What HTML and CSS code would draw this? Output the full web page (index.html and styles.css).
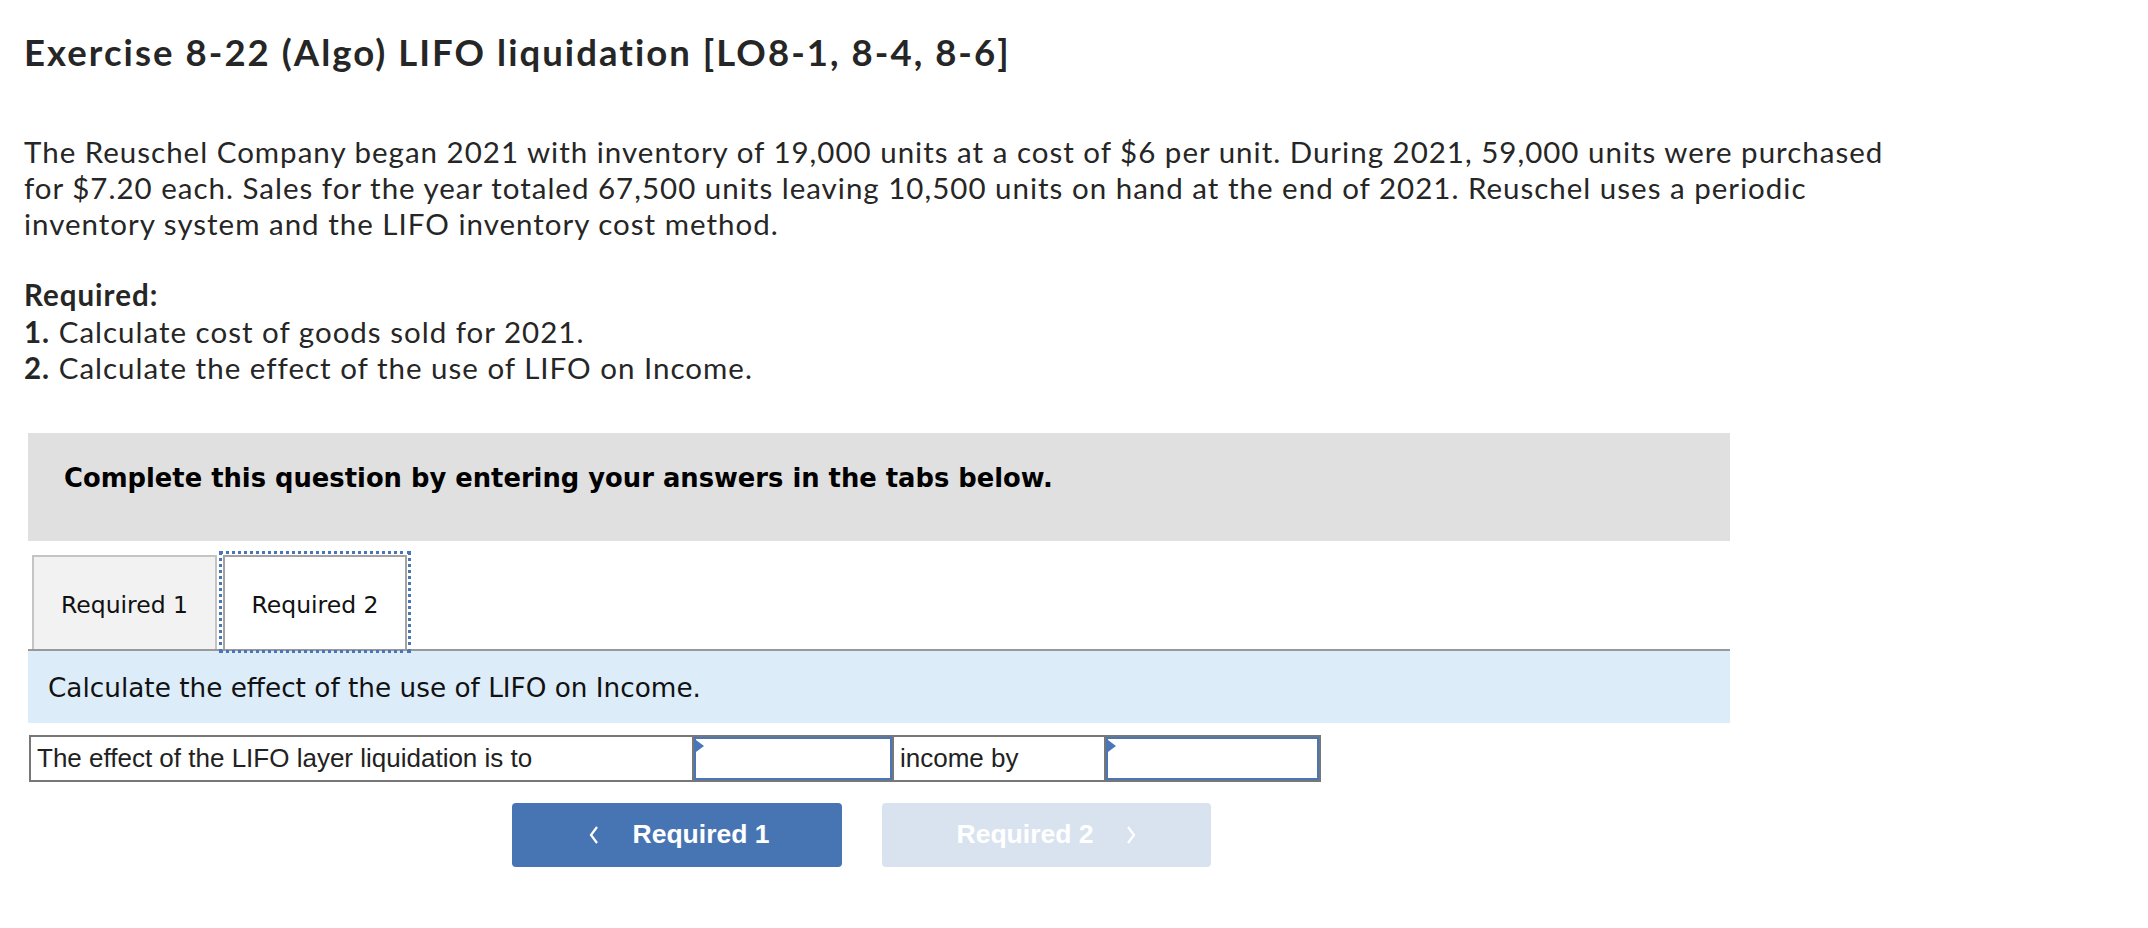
FILE: index.html
```html
<!DOCTYPE html>
<html lang="en">
<head>
<meta charset="utf-8">
<title>Exercise 8-22 (Algo) LIFO liquidation</title>
<link rel="stylesheet" href="styles.css">
</head>
<body>
<div class="page">
  <h1 class="title">Exercise 8-22 (Algo) LIFO liquidation [LO8-1, 8-4, 8-6]</h1>
  <p class="desc">The Reuschel Company began 2021 with inventory of 19,000 units at a cost of $6 per unit. During 2021, 59,000 units were purchased<br>for $7.20 each. Sales for the year totaled 67,500 units leaving 10,500 units on hand at the end of 2021. Reuschel uses a periodic<br>inventory system and the LIFO inventory cost method.</p>
  <div class="req">
    <div class="req-head">Required:</div>
    <div><span class="num">1.</span> Calculate cost of goods sold for 2021.</div>
    <div><span class="num">2.</span> Calculate the effect of the use of LIFO on Income.</div>
  </div>

  <div class="panel">
    <div class="instruction">Complete this question by entering your answers in the tabs below.</div>
    <div class="tabs">
      <div class="tab">Required 1</div>
      <div class="tab active">Required 2</div>
    </div>
    <div class="prompt">Calculate the effect of the use of LIFO on Income.</div>
    <div class="answer">
      <div class="cell text">The effect of the LIFO layer liquidation is to</div>
      <div class="cell input"><div class="field"></div></div>
      <div class="cell text">income by</div>
      <div class="cell input"><div class="field"></div></div>
    </div>
    <div class="nav">
      <div class="btn prev">
        <svg class="chev" width="10" height="18" viewBox="0 0 10 18"><polyline points="8,1 2,9 8,17" fill="none" stroke="#fff" stroke-width="2.2"/></svg>
        <span>Required 1</span>
      </div>
      <div class="btn next">
        <span>Required 2</span>
        <svg class="chev" width="10" height="18" viewBox="0 0 10 18"><polyline points="2,1 8,9 2,17" fill="none" stroke="#fff" stroke-width="2.2"/></svg>
      </div>
    </div>
  </div>
</div>
</body>
</html>
```

FILE: styles.css
```css
html, body {
  margin: 0;
  padding: 0;
  background: #ffffff;
}

.page {
  padding: 30px 0 0 24px;
  color: #262626;
  font-family: Lato, "Liberation Sans", sans-serif;
}

.title {
  margin: 0;
  font-size: 36.5px;
  line-height: 44px;
  font-weight: 700;
  letter-spacing: 2.05px;
  color: #262626;
}

.desc {
  margin: 60px 0 0 0;
  font-size: 29.5px;
  line-height: 36px;
  letter-spacing: 1px;
}

.req {
  margin-top: 35px;
  font-size: 29.5px;
  line-height: 36.5px;
  letter-spacing: 1px;
}

.req-head,
.num {
  font-weight: 700;
}

.panel {
  margin: 46px 0 0 4px;
  width: 1702px;
}

.instruction {
  background: #e0e0e0;
  height: 108px;
  box-sizing: border-box;
  padding: 30px 0 0 36px;
  font-family: "DejaVu Sans", Verdana, sans-serif;
  font-weight: 700;
  font-size: 25.8px;
  line-height: 30px;
  color: #000;
}

.tabs {
  display: flex;
  margin-top: 14px;
  border-bottom: 2px solid #999999;
  padding-left: 4px;
}

.tab {
  box-sizing: border-box;
  height: 94px;
  width: 185px;
  padding-top: 5px;
  display: flex;
  align-items: center;
  justify-content: center;
  border: 2px solid #c4c4c4;
  border-bottom: none;
  background: #f2f2f2;
  font-family: "DejaVu Sans", Verdana, sans-serif;
  font-size: 23.5px;
  color: #111;
}

.tab.active {
  margin-left: 6px;
  width: 184px;
  background: #ffffff;
  border-color: #a3a3a3;
  outline: 3px dotted #4a76b8;
  outline-offset: 1px;
}

.prompt {
  background: #ddecf9;
  height: 72px;
  box-sizing: border-box;
  padding: 22px 0 0 20px;
  font-family: "DejaVu Sans", Verdana, sans-serif;
  font-size: 26.3px;
  line-height: 30px;
  color: #111;
}

.answer {
  margin: 12px 0 0 1px;
  display: grid;
  grid-template-columns: 661px 198px 210px 213px;
  grid-template-rows: 43px;
  gap: 2px;
  width: max-content;
  border: 2px solid #777777;
  background: #777777;
}

.cell {
  background: #ffffff;
}

.cell.text {
  display: flex;
  align-items: center;
  padding: 0 6px;
  font-family: "Liberation Sans", Arial, sans-serif;
  font-size: 26px;
  color: #222;
  white-space: nowrap;
}

.cell.input {
  position: relative;
}

.field {
  position: relative;
  box-sizing: border-box;
  height: 100%;
  border: 2px solid #4a76b8;
}

.field::before {
  content: "";
  position: absolute;
  left: 0;
  top: 1px;
  border-top: 6px solid transparent;
  border-bottom: 6px solid transparent;
  border-left: 8px solid #4a76b8;
}

.nav {
  display: flex;
  gap: 40px;
  margin: 21px 0 0 484px;
}

.btn {
  box-sizing: border-box;
  width: 330px;
  height: 64px;
  border-radius: 4px;
  display: flex;
  align-items: center;
  justify-content: center;
  gap: 34px;
  font-family: "Liberation Sans", Arial, sans-serif;
  font-weight: 700;
  font-size: 26.5px;
  color: #ffffff;
}

.btn.prev {
  background: #4775b3;
}

.btn.prev .chev {
  margin-left: 4px;
}

.btn.next {
  width: 329px;
  background: #d9e3ef;
  gap: 33px;
}

.chev {
  display: block;
}
```
